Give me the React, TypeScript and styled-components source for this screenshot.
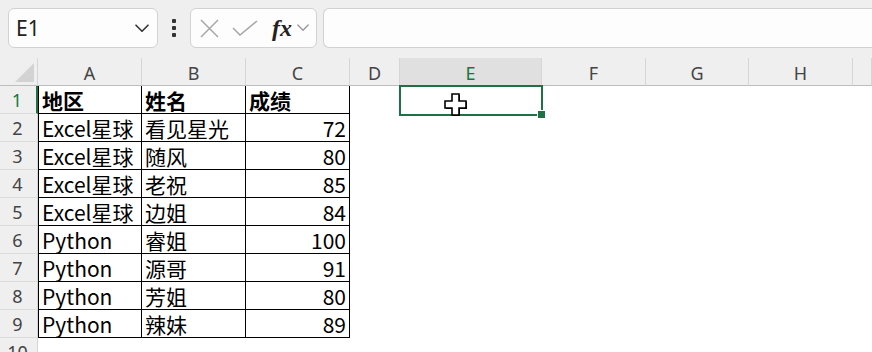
import React from 'react';
import styled, { createGlobalStyle } from 'styled-components';

const GlobalStyle = createGlobalStyle`
  html, body {
    margin: 0;
    padding: 0;
    background: #ffffff;
    overflow: hidden;
  }
  body {
    font-family: "Noto Sans", "Noto Sans CJK SC", sans-serif;
  }
`;

const Page = styled.div`
  width: 872px;
  height: 352px;
  display: flex;
  flex-direction: column;
  overflow: hidden;
`;

const Toolbar = styled.div`
  height: 58px;
  flex: none;
  display: flex;
  align-items: center;
  padding: 0 0 2px 8px;
  box-sizing: border-box;
  background: #efefef;
`;

const Box = styled.div`
  height: 40px;
  box-sizing: border-box;
  background: #fdfdfd;
  border: 1px solid #d2d2d2;
  border-radius: 6px;
  display: flex;
  align-items: center;
`;

const NameBox = styled(Box)`
  width: 150px;
  padding: 0 8px 0 7px;
  justify-content: space-between;
  font-size: 21px;
  color: #222;
`;

const Dots = styled.div`
  width: 32px;
  display: flex;
  flex-direction: column;
  align-items: center;
  gap: 3px;
  span {
    width: 4px;
    height: 4px;
    border-radius: 1px;
    background: #333;
  }
`;

const FxBox = styled(Box)`
  width: 127px;
  padding: 0 0 0 9px;
  gap: 13px;
`;

const FxLabel = styled.span`
  font-family: "Liberation Serif", "DejaVu Serif", serif;
  font-style: italic;
  font-weight: 700;
  font-size: 24px;
  color: #222;
  margin-left: 1px;
  margin-right: -8px;
  line-height: 1;
`;

const FormulaBox = styled(Box)`
  flex: 1;
  margin-left: 6px;
  border-right: none;
  border-radius: 6px 0 0 6px;
`;

const Sheet = styled.div`
  display: grid;
  grid-template-columns: 38px 104px 104px 104px 50px 142px 104px 103px 104px 1fr;
  grid-template-rows: 28px;
  grid-auto-rows: 28px;
  background: #fff;
`;

const Corner = styled.div`
  background: #efefef;
  border-right: 1px solid #d6d6d6;
  border-bottom: 1px solid #bdbdbd;
  position: relative;
  svg {
    position: absolute;
    right: 3px;
    bottom: 3px;
  }
`;

const ColHead = styled.div<{ $active?: boolean }>`
  background: ${(p) => (p.$active ? '#e0e0e0' : '#efefef')};
  border-right: 1px solid #d6d6d6;
  border-bottom: 1px solid #bdbdbd;
  display: flex;
  align-items: center;
  justify-content: center;
  font-family: "Noto Sans", sans-serif;
  font-size: 18px;
  color: ${(p) => (p.$active ? '#107c41' : '#444')};
  padding-top: 2px;
  box-sizing: border-box;
`;

const RowHead = styled.div<{ $active?: boolean }>`
  background: #efefef;
  border-bottom: 1px solid #dcdcdc;
  border-right: ${(p) => (p.$active ? '2px solid #1e7145' : '1px solid #d6d6d6')};
  box-sizing: border-box;
  display: flex;
  align-items: center;
  justify-content: center;
  font-family: "Noto Sans", sans-serif;
  font-size: 18px;
  color: ${(p) => (p.$active ? '#107c41' : '#444')};
  padding-right: 2px;
`;

const Cell = styled.div<{ $data?: boolean; $first?: boolean; $right?: boolean; $bold?: boolean }>`
  box-sizing: border-box;
  border-right: ${(p) => (p.$data ? '1px solid #000' : 'none')};
  border-bottom: ${(p) => (p.$data ? '1px solid #000' : 'none')};
  border-left: ${(p) => (p.$first ? '1px solid #000' : 'none')};
  display: flex;
  align-items: center;
  justify-content: ${(p) => (p.$right ? 'flex-end' : 'flex-start')};
  padding: 1px 3px 0 3px;
  font-family: "Noto Sans CJK SC", sans-serif;
  font-size: 21px;
  font-weight: ${(p) => (p.$bold ? 700 : 400)};
  color: #000;
  white-space: nowrap;
  overflow: hidden;
`;

const SelectedCell = styled.div`
  position: relative;
`;

const SelectionFrame = styled.div`
  position: absolute;
  left: -1px;
  top: -1px;
  right: -1px;
  bottom: -2px;
  border: 2px solid #1e7145;
  pointer-events: none;
`;

const FillHandle = styled.div`
  position: absolute;
  right: -5px;
  bottom: -5px;
  width: 7px;
  height: 7px;
  background: #1e7145;
  border: 1px solid #fff;
`;

const Cursor = styled.svg`
  position: absolute;
  left: 44px;
  top: 7px;
`;

const columns = ['A', 'B', 'C', 'D', 'E', 'F', 'G', 'H', ''];

const data: [string, string, string][] = [
  ['地区', '姓名', '成绩'],
  ['Excel星球', '看见星光', '72'],
  ['Excel星球', '随风', '80'],
  ['Excel星球', '老祝', '85'],
  ['Excel星球', '边姐', '84'],
  ['Python', '睿姐', '100'],
  ['Python', '源哥', '91'],
  ['Python', '芳姐', '80'],
  ['Python', '辣妹', '89'],
];

function Chevron({ color, w = 14 }: { color: string; w?: number }) {
  return (
    <svg width={w} height={w * 0.6} viewBox="0 0 14 8" fill="none">
      <polyline points="1,1 7,7 13,1" stroke={color} strokeWidth="1.6" strokeLinecap="round" strokeLinejoin="round" />
    </svg>
  );
}

export default function App() {
  return (
    <Page>
      <GlobalStyle />
      <Toolbar>
        <NameBox>
          <span>E1</span>
          <Chevron color="#333" />
        </NameBox>
        <Dots>
          <span />
          <span />
          <span />
        </Dots>
        <FxBox>
          <svg width="19" height="19" viewBox="0 0 19 19" fill="none">
            <path d="M1 1 L18 18 M18 1 L1 18" stroke="#a6a6a6" strokeWidth="1.5" />
          </svg>
          <svg width="26" height="16" viewBox="0 0 26 16" fill="none">
            <path d="M1 8 L8 15 L25 1" stroke="#a6a6a6" strokeWidth="1.5" />
          </svg>
          <FxLabel>fx</FxLabel>
          <Chevron color="#999" w={12} />
        </FxBox>
        <FormulaBox />
      </Toolbar>
      <Sheet>
        <Corner>
          <svg width="19" height="19" viewBox="0 0 19 19">
            <polygon points="19,0 19,19 0,19" fill="#d3d3d3" />
          </svg>
        </Corner>
        {columns.map((c) => (
          <ColHead key={c || 'I'} $active={c === 'E'}>
            {c}
          </ColHead>
        ))}
        {Array.from({ length: 10 }, (_, r) => {
          const row = data[r];
          return (
            <React.Fragment key={r}>
              <RowHead $active={r === 0}>{r + 1}</RowHead>
              {columns.map((c, ci) => {
                if (row && ci < 3) {
                  return (
                    <Cell key={c} $data $first={ci === 0} $right={ci === 2 && r > 0} $bold={r === 0}>
                      {row[ci]}
                    </Cell>
                  );
                }
                if (r === 0 && c === 'E') {
                  return (
                    <SelectedCell key={c}>
                      <SelectionFrame>
                        <FillHandle />
                      </SelectionFrame>
                      <Cursor width="24" height="24" viewBox="0 0 24 24">
                        <polygon
                          points="8,1 15,1 15,8 22,8 22,15 15,15 15,22 8,22 8,15 1,15 1,8 8,8"
                          fill="#000"
                          transform="translate(1,1)"
                        />
                        <polygon
                          points="8,1 15,1 15,8 22,8 22,15 15,15 15,22 8,22 8,15 1,15 1,8 8,8"
                          fill="#fff"
                          stroke="#000"
                          strokeWidth="1.6"
                        />
                      </Cursor>
                    </SelectedCell>
                  );
                }
                return <Cell key={c || 'I'} />;
              })}
            </React.Fragment>
          );
        })}
      </Sheet>
    </Page>
  );
}
